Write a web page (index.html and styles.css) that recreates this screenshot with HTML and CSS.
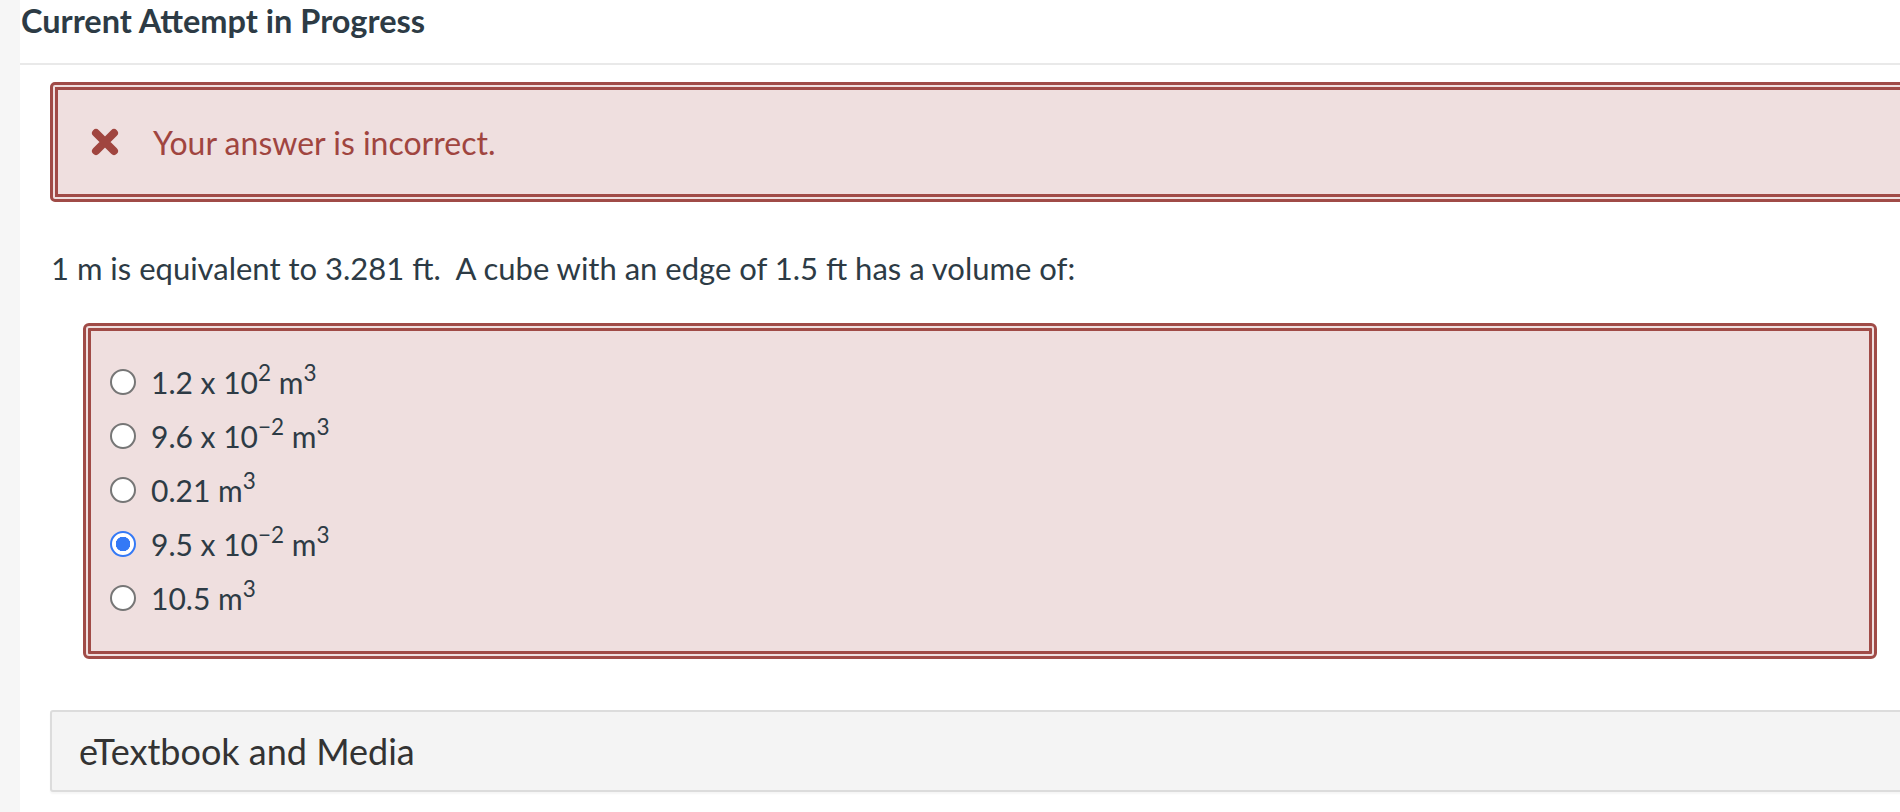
FILE: index.html
```html
<!DOCTYPE html>
<html lang="en">
	<head>
		<meta charset="UTF-8" />
		<meta name="viewport" content="width=device-width, initial-scale=1.0" />
		<title>Current Attempt in Progress</title>
		<link rel="stylesheet" href="styles.css">
	</head>
	<body>
		<div class="page">
			<div class="rail"></div>
			<div class="content">
				<h2 class="heading">Current Attempt in Progress</h2>
				<div class="question">
					<div class="alert">
						<svg class="alert-icon" width="30" height="30" viewBox="0 0 30 30">
							<path d="M6 6 L24 24 M24 6 L6 24" />
						</svg>
						<span>Your answer is incorrect.</span>
					</div>

					<p class="prompt">1 m is equivalent to 3.281 ft.&nbsp; A cube with an edge of 1.5 ft has a volume of:</p>

					<div class="choices">
						<label class="choice">
							<input type="radio" name="answer" />
							<span>1.2 x 10<sup>2</sup> m<sup>3</sup></span>
						</label>
						<label class="choice">
							<input type="radio" name="answer" />
							<span>9.6 x 10<sup>−2</sup> m<sup>3</sup></span>
						</label>
						<label class="choice">
							<input type="radio" name="answer" />
							<span>0.21 m<sup>3</sup></span>
						</label>
						<label class="choice">
							<input type="radio" name="answer" checked />
							<span>9.5 x 10<sup>−2</sup> m<sup>3</sup></span>
						</label>
						<label class="choice">
							<input type="radio" name="answer" />
							<span>10.5 m<sup>3</sup></span>
						</label>
					</div>

					<div class="media">eTextbook and Media</div>
				</div>
			</div>
		</div>
	</body>
</html>
```

FILE: styles.css
```css
body {
	margin: 0;
	font-family: Lato, "Open Sans", sans-serif;
	color: #2d3b45;
	background: #fff;
}

.page {
	display: flex;
	min-height: 100vh;
}

.rail {
	flex: none;
	width: 20px;
	background-color: #f6f6f6;
}

.content {
	flex: 1;
	overflow: hidden;
}

.heading {
	margin: 0;
	padding: 2px 0 23px 1px;
	font-size: 32.5px;
	line-height: 38px;
	font-weight: 700;
	border-bottom: 2px solid #e9e9e9;
}

.question {
	padding: 17px 0 0 30px;
}

.alert {
	display: flex;
	align-items: center;
	gap: 33px;
	height: 104px;
	margin-right: -40px;
	padding-left: 32px;
	border: 8px double #a04b47;
	border-radius: 5px;
	background-color: #efdfdf;
	color: #a0453f;
	font-size: 32px;
}

.alert-icon {
	flex: none;
}

.alert-icon path {
	stroke: #a0453f;
	stroke-width: 8;
	stroke-linecap: round;
	fill: none;
}

.prompt {
	margin: 47px 0 36px 1px;
	font-size: 31px;
	line-height: 38px;
}

.choices {
	display: flex;
	flex-direction: column;
	margin: 0 23px 0 33px;
	padding: 24px 0 26px 19px;
	border: 8px double #a04b47;
	border-radius: 6px;
	background-color: #efdfdf;
}

.choice {
	display: flex;
	align-items: center;
	gap: 15px;
	height: 54px;
	font-size: 30px;
}

.choice sup {
	font-size: 0.75em;
	line-height: 0;
	vertical-align: 0.6em;
}

.choice input {
	appearance: none;
	flex: none;
	margin: 0;
	width: 26px;
	height: 26px;
	border: 2px solid #767676;
	border-radius: 50%;
	background-color: #fff;
}

.choice input:checked {
	border-color: #3479f6;
	background: radial-gradient(circle, #3479f6 0 7px, #fff 7.5px);
}

.media {
	margin: 51px -40px 0 0;
	height: 78px;
	display: flex;
	align-items: center;
	padding-left: 27px;
	border: 2px solid #dcdcdc;
	border-radius: 3px;
	background-color: #f4f4f4;
	color: #333;
	font-size: 36px;
	box-shadow: 0 2px 2px rgba(0, 0, 0, 0.04);
}
```
